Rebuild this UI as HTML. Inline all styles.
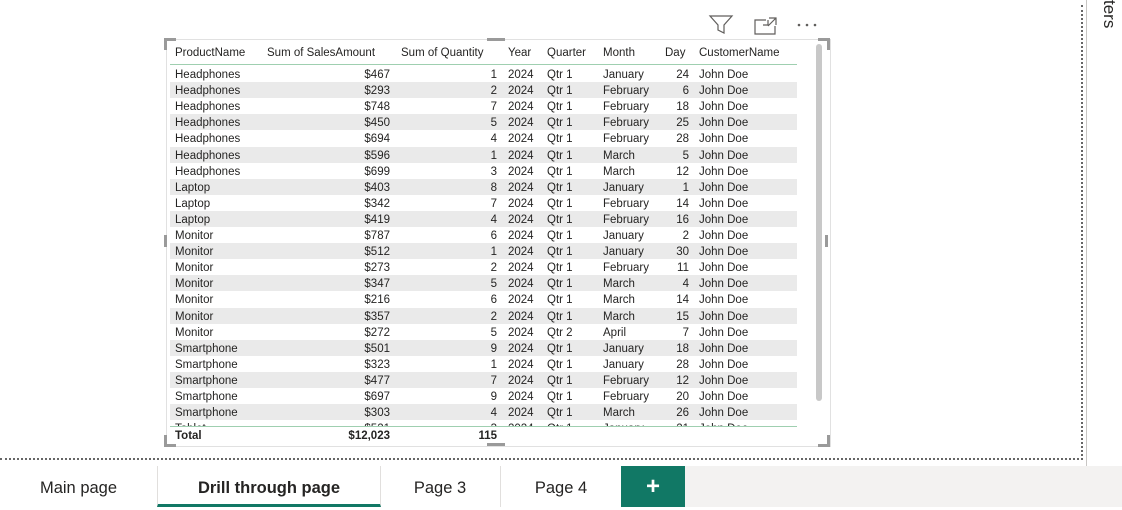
<!DOCTYPE html>
<html><head><style>
body{margin:0;width:1122px;height:507px;background:#fff;position:relative;overflow:hidden;font-family:"Liberation Sans",sans-serif;color:#252423}
.a{position:absolute}
.c{position:absolute;font-size:11.5px;line-height:16px;white-space:nowrap}
.rt{text-align:right}
.tab{position:absolute;top:466px;height:41px;line-height:44px;font-size:16.5px;text-align:center;color:#252423}
</style></head><body>
<div class="a" style="left:1081px;top:5px;height:455px;border-left:2px dotted #666"></div>
<div class="a" style="left:1086px;top:0;height:466px;width:1px;background:#c8c6c4"></div>
<div class="a" style="font-size:17px;transform:rotate(90deg);transform-origin:left top;left:1119px;top:0px;">ters</div>
<div class="a" style="left:0;top:458px;width:1083px;border-top:2px dotted #666"></div>
<div class="a" style="left:166px;top:39px;width:663px;height:406px;border:1px solid #e1e1e1"></div>
<div class="a" style="left:164px;top:38px;width:9px;height:9px;border-left:3px solid #9a9a9a;border-top:3px solid #9a9a9a"></div>
<div class="a" style="left:818px;top:38px;width:9px;height:9px;border-right:3px solid #9a9a9a;border-top:3px solid #9a9a9a"></div>
<div class="a" style="left:164px;top:435px;width:9px;height:9px;border-left:3px solid #9a9a9a;border-bottom:3px solid #9a9a9a"></div>
<div class="a" style="left:818px;top:435px;width:9px;height:9px;border-right:3px solid #9a9a9a;border-bottom:3px solid #9a9a9a"></div>
<div class="a" style="left:487px;top:38px;width:18px;height:3px;background:#9a9a9a"></div>
<div class="a" style="left:487px;top:443px;width:18px;height:3px;background:#9a9a9a"></div>
<div class="a" style="left:164px;top:235px;width:3px;height:12px;background:#9a9a9a"></div>
<div class="a" style="left:825px;top:235px;width:3px;height:12px;background:#9a9a9a"></div>
<div class="a" style="left:816px;top:44px;width:6px;height:357px;background:#c8c8c8;border-radius:3px"></div>
<svg class="a" style="left:708px;top:14px" width="120" height="22" viewBox="0 0 120 22">
<path d="M2 2h22l-8 9v8l-6-3v-5z" fill="none" stroke="#605e5c" stroke-width="1.2"/>
<path d="M58 6h-11v14h20v-8M55 11h5v-5M61 4h7v7M68 4l-8 8" fill="none" stroke="#605e5c" stroke-width="1.2"/>
<circle cx="91" cy="11" r="1.3" fill="#605e5c"/><circle cx="99" cy="11" r="1.3" fill="#605e5c"/><circle cx="107" cy="11" r="1.3" fill="#605e5c"/>
</svg>
<div class="c" style="left:175px;top:45px">ProductName</div>
<div class="c" style="left:267px;top:45px">Sum of SalesAmount</div>
<div class="c" style="left:401px;top:45px">Sum of Quantity</div>
<div class="c" style="left:508px;top:45px">Year</div>
<div class="c" style="left:547px;top:45px">Quarter</div>
<div class="c" style="left:603px;top:45px">Month</div>
<div class="c" style="left:665px;top:45px">Day</div>
<div class="c" style="left:699px;top:45px">CustomerName</div>
<div class="a" style="left:170px;top:64px;width:627px;border-top:1px solid #9fcfb0"></div>
<div class="a" id="b" style="left:0;top:65px;width:800px;height:361px;overflow:hidden"></div>
<div class="a" style="left:170px;top:426px;width:627px;border-top:1px solid #9fcfb0"></div>
<div class="c" style="left:175px;top:428px;font-weight:bold">Total</div>
<div class="c rt" style="left:290px;top:428px;width:100px;font-weight:bold">$12,023</div>
<div class="c rt" style="left:400px;top:428px;width:97px;font-weight:bold">115</div>
<script>
var d=[["Headphones",467,1,"Qtr 1","January",24],["Headphones",293,2,"Qtr 1","February",6],["Headphones",748,7,"Qtr 1","February",18],["Headphones",450,5,"Qtr 1","February",25],["Headphones",694,4,"Qtr 1","February",28],["Headphones",596,1,"Qtr 1","March",5],["Headphones",699,3,"Qtr 1","March",12],["Laptop",403,8,"Qtr 1","January",1],["Laptop",342,7,"Qtr 1","February",14],["Laptop",419,4,"Qtr 1","February",16],["Monitor",787,6,"Qtr 1","January",2],["Monitor",512,1,"Qtr 1","January",30],["Monitor",273,2,"Qtr 1","February",11],["Monitor",347,5,"Qtr 1","March",4],["Monitor",216,6,"Qtr 1","March",14],["Monitor",357,2,"Qtr 1","March",15],["Monitor",272,5,"Qtr 2","April",7],["Smartphone",501,9,"Qtr 1","January",18],["Smartphone",323,1,"Qtr 1","January",28],["Smartphone",477,7,"Qtr 1","February",12],["Smartphone",697,9,"Qtr 1","February",20],["Smartphone",303,4,"Qtr 1","March",26],["Tablet",521,3,"Qtr 1","January",21]];
var h="";d.forEach(function(r,i){var b=1+i*16.1;var t=(b+1).toFixed(1);
if(i%2)h+='<div class="a" style="left:170px;top:'+b.toFixed(1)+'px;width:627px;height:16px;background:#eaeaea"></div>';
h+='<div class="c" style="left:175px;top:'+t+'px">'+r[0]+'</div><div class="c rt" style="left:290px;width:100px;top:'+t+'px">$'+r[1]+'</div><div class="c rt" style="left:450px;width:47px;top:'+t+'px">'+r[2]+'</div><div class="c" style="left:508px;top:'+t+'px">2024</div><div class="c" style="left:547px;top:'+t+'px">'+r[3]+'</div><div class="c" style="left:603px;top:'+t+'px">'+r[4]+'</div><div class="c rt" style="left:660px;width:29px;top:'+t+'px">'+r[5]+'</div><div class="c" style="left:699px;top:'+t+'px">John Doe</div>';});
document.getElementById("b").innerHTML=h;
</script>
<div class="a" style="left:685px;top:466px;width:437px;height:41px;background:#f3f2f1"></div>
<div class="tab" style="left:0;width:157px">Main page</div>
<div class="tab" style="left:157px;width:222px;border-left:1px solid #e1dfdd;border-right:1px solid #e1dfdd;font-weight:bold;height:38px;border-bottom:3px solid #117865">Drill through page</div>
<div class="tab" style="left:380px;width:120px">Page 3</div>
<div class="tab" style="left:500px;width:120px;border-left:1px solid #e1dfdd">Page 4</div>
<div class="tab" style="left:621px;width:64px;background:#117865;color:#fff;font-size:24px;font-weight:bold;line-height:41px">+</div>
</body></html>
